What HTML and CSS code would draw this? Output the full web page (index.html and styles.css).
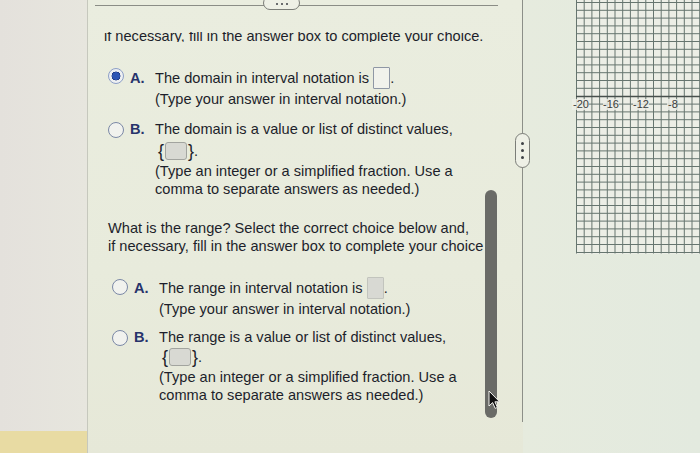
FILE: index.html
```html
<!DOCTYPE html>
<html>
<head>
<meta charset="utf-8">
<link rel="stylesheet" href="styles.css">
</head>
<body>
<div class="screen">
  <aside class="side"><div class="side-band"></div></aside>
  <section class="work">
    <div class="topbar">
      <span class="rule"></span>
      <span class="pill"><i></i><i></i><i></i></span>
    </div>
    <div class="body">
      <div class="qcol">
        <div class="clipline"><div class="cliptext">if necessary, fill in the answer box to complete your choice.</div></div>

        <div class="opt opt-first">
          <span class="radio on"></span>
          <span class="letter">A.</span>
          <div class="otext">
            <div class="boxline">The domain in interval notation is <span class="box empty"></span>.</div>
            <div>(Type your answer in interval notation.)</div>
          </div>
        </div>

        <div class="opt opt-b">
          <span class="radio"></span>
          <span class="letter">B.</span>
          <div class="otext">
            <div>The domain is a value or list of distinct values,</div>
            <div class="setline tall"><span class="brace">{</span><span class="box grey small"></span><span class="brace">}</span>.</div>
            <div>(Type an integer or a simplified fraction. Use a</div>
            <div>comma to separate answers as needed.)</div>
          </div>
        </div>

        <div class="lower">
          <p class="question">What is the range? Select the correct choice below and,<br>if necessary, fill in the answer box to complete your choice</p>

          <div class="opt opt-ra">
            <span class="radio"></span>
            <span class="letter">A.</span>
            <div class="otext">
              <div class="boxline">The range in interval notation is <span class="box grey"></span>.</div>
              <div>(Type your answer in interval notation.)</div>
            </div>
          </div>

          <div class="opt opt-rb">
            <span class="radio"></span>
            <span class="letter">B.</span>
            <div class="otext">
              <div>The range is a value or list of distinct values,</div>
              <div class="setline"><span class="brace">{</span><span class="box grey small"></span><span class="brace">}</span>.</div>
              <div>(Type an integer or a simplified fraction. Use a</div>
              <div>comma to separate answers as needed.)</div>
            </div>
          </div>
        </div>
      </div>
      <div class="track"><div class="thumb"></div></div>
    </div>
  </section>
  <div class="divider"><span class="handle"><i></i><i></i><i></i></span></div>
  <section class="graph">
    <svg class="grid" width="124" height="254" viewBox="0 0 124 254">
      <g stroke="#66756f" stroke-width="1" fill="none">
        <path d="M0.5 0V253.5M8.2 0V253.5M15.9 0V253.5M23.6 0V253.5M31.3 0V253.5M39 0V253.5M46.7 0V253.5M54.4 0V253.5M62.1 0V253.5M69.8 0V253.5M77.5 0V253.5M85.2 0V253.5M92.9 0V253.5M100.6 0V253.5M108.3 0V253.5M116 0V253.5M123.7 0V253.5"/>
        <path d="M0 2.5H124M0 10.3H124M0 18.1H124M0 25.9H124M0 33.7H124M0 41.5H124M0 49.3H124M0 57.1H124M0 64.9H124M0 72.7H124M0 80.5H124M0 88.3H124M0 104.1H124M0 111.9H124M0 119.7H124M0 127.5H124M0 135.3H124M0 143.1H124M0 150.9H124M0 158.7H124M0 166.5H124M0 174.3H124M0 182.1H124M0 189.9H124M0 197.7H124M0 205.5H124M0 213.3H124M0 221.1H124M0 228.9H124M0 236.7H124M0 244.5H124M0 252.5H124"/>
      </g>
      <path d="M0 96.5H124" stroke="#47504d" stroke-width="1.6"/>
      <g fill="#eeefe8" opacity="0.8">
        <rect x="-4" y="99" width="17" height="11"/>
        <rect x="27" y="99" width="16" height="11"/>
        <rect x="57" y="99" width="16" height="11"/>
        <rect x="91" y="99" width="10" height="11"/>
      </g>
      <g font-family="Liberation Sans, Arial, sans-serif" font-size="11" fill="#3a3d3c">
        <text x="-3" y="108">-20</text>
        <text x="27" y="108">-16</text>
        <text x="57" y="108">-12</text>
        <text x="92" y="108">-8</text>
      </g>
    </svg>
  </section>
  <svg class="cursor" width="14" height="20" viewBox="0 0 14 20">
    <path d="M1 1V16L4.6 12.6L7.2 18.4L9.4 17.4L6.9 11.8H11.6Z" fill="#111" stroke="#f4f4f0" stroke-width="1"/>
  </svg>
</div>
</body>
</html>
```

FILE: styles.css
```css
* { box-sizing: border-box; }
html, body { margin: 0; padding: 0; }
body {
  width: 700px;
  height: 453px;
  overflow: hidden;
  background: #e9ecdd;
  font-family: "Liberation Sans", Arial, sans-serif;
}
.screen {
  position: relative;
  display: flex;
  width: 700px;
  height: 453px;
  background: linear-gradient(180deg, #eaeddf 0%, #e8ebdc 60%, #e6e8d8 100%);
}
.side {
  width: 88px;
  flex: none;
  display: flex;
  flex-direction: column;
  justify-content: flex-end;
  background: linear-gradient(90deg, #e4e1dc 0%, #e7e6de 100%);
  border-right: 1px solid #c6c8bd;
}
.side-band {
  height: 22px;
  background: #e8dba3;
}
.work {
  width: 434px;
  flex: none;
  display: flex;
  flex-direction: column;
}
.topbar {
  position: relative;
  height: 10px;
  margin-left: 7px;
  width: 403px;
  display: flex;
  align-items: center;
}
.rule {
  display: block;
  width: 100%;
  height: 1px;
  background: #8b8d86;
}
.pill {
  position: absolute;
  left: 168px;
  top: -4px;
  width: 37px;
  height: 14px;
  border: 1px solid #7b7d78;
  border-radius: 7px;
  background: #eef0e6;
  display: flex;
  align-items: center;
  justify-content: center;
  gap: 3px;
  padding-top: 2px;
}
.pill i, .handle i {
  display: block;
  width: 2px;
  height: 2px;
  border-radius: 50%;
  background: #3e4146;
}
.body {
  flex: 1;
  display: flex;
}
.qcol {
  width: 397px;
  flex: none;
  padding-left: 16px;
  font-size: 14.6px;
  line-height: 18px;
  color: #1d1f2b;
}
.clipline {
  height: 10px;
  margin-top: 22px;
  overflow: hidden;
}
.cliptext {
  margin-top: -5px;
  white-space: nowrap;
}
.opt {
  display: grid;
  grid-template-columns: 22px 25px 1fr;
  margin-left: 4px;
}
.radio {
  display: block;
  width: 16px;
  height: 16px;
  border-radius: 50%;
  border: 1.5px solid #7b88a6;
  background: #f1f2ee;
  margin-top: 1px;
}
.radio.on {
  border: 1.5px solid #8d9fc8;
  background: radial-gradient(circle, #2d55b4 0 3.6px, #26408a 3.8px 4.4px, #eef0f2 4.6px);
}
.letter {
  font-weight: bold;
  color: #27336b;
}
.otext div { white-space: nowrap; }
.opt-first { margin-top: 24px; }
.opt-first .radio { margin-top: 2px; }
.boxline {
  height: 24px;
  line-height: 24px;
}
.opt-first .letter, .opt-ra .letter { line-height: 24px; }
.box {
  display: inline-block;
  vertical-align: middle;
  width: 17px;
  height: 22px;
  border: 1px solid #8f97a5;
  border-radius: 1px;
  margin-top: -3px;
}
.box.empty { background: #f1f2ec; }
.box.grey {
  background: #d8d9d3;
  border-color: #c2c4bd;
}
.box.small {
  width: 22px;
  height: 18px;
  border-radius: 3px;
  border-color: #a2a49f;
  margin: -2px 1px 0;
}
.opt-b { margin-top: 12px; }
.opt-b .radio, .opt-rb .radio { margin-top: 2px; }
.setline {
  height: 22px;
  line-height: 22px;
  padding-left: 3px;
}
.setline.tall {
  height: 24px;
  padding-top: 2px;
}
.brace {
  display: inline-block;
  font-size: 18px;
  line-height: 18px;
  vertical-align: middle;
  margin-top: -3px;
}
.lower { padding-left: 4px; }
.question {
  margin: 21px 0 0 0;
  white-space: nowrap;
}
.opt-ra { margin-top: 21px; }
.opt-ra .radio { margin-top: 3px; }
.opt-rb { margin-top: 10px; }
.track {
  width: 12px;
  flex: none;
  padding-top: 180px;
}
.thumb {
  height: 228px;
  border-radius: 6px;
  background: #6a6b67;
}
.divider {
  position: relative;
  width: 1px;
  flex: none;
  height: 422px;
  background: #8c8f88;
}
.handle {
  position: absolute;
  left: -7px;
  top: 133px;
  width: 15px;
  height: 35px;
  border: 1px solid #7b7d78;
  border-radius: 8px;
  background: #eef0e6;
  display: flex;
  flex-direction: column;
  align-items: center;
  justify-content: center;
  gap: 4px;
}
.handle i { width: 3px; height: 3px; }
.graph {
  flex: 1;
  padding-left: 53px;
  background: linear-gradient(90deg, #e6ebde 0%, #e3eadf 100%);
}
.grid { display: block; background: #eceee6; overflow: visible; }
.cursor {
  position: absolute;
  left: 488px;
  top: 390px;
}
```
